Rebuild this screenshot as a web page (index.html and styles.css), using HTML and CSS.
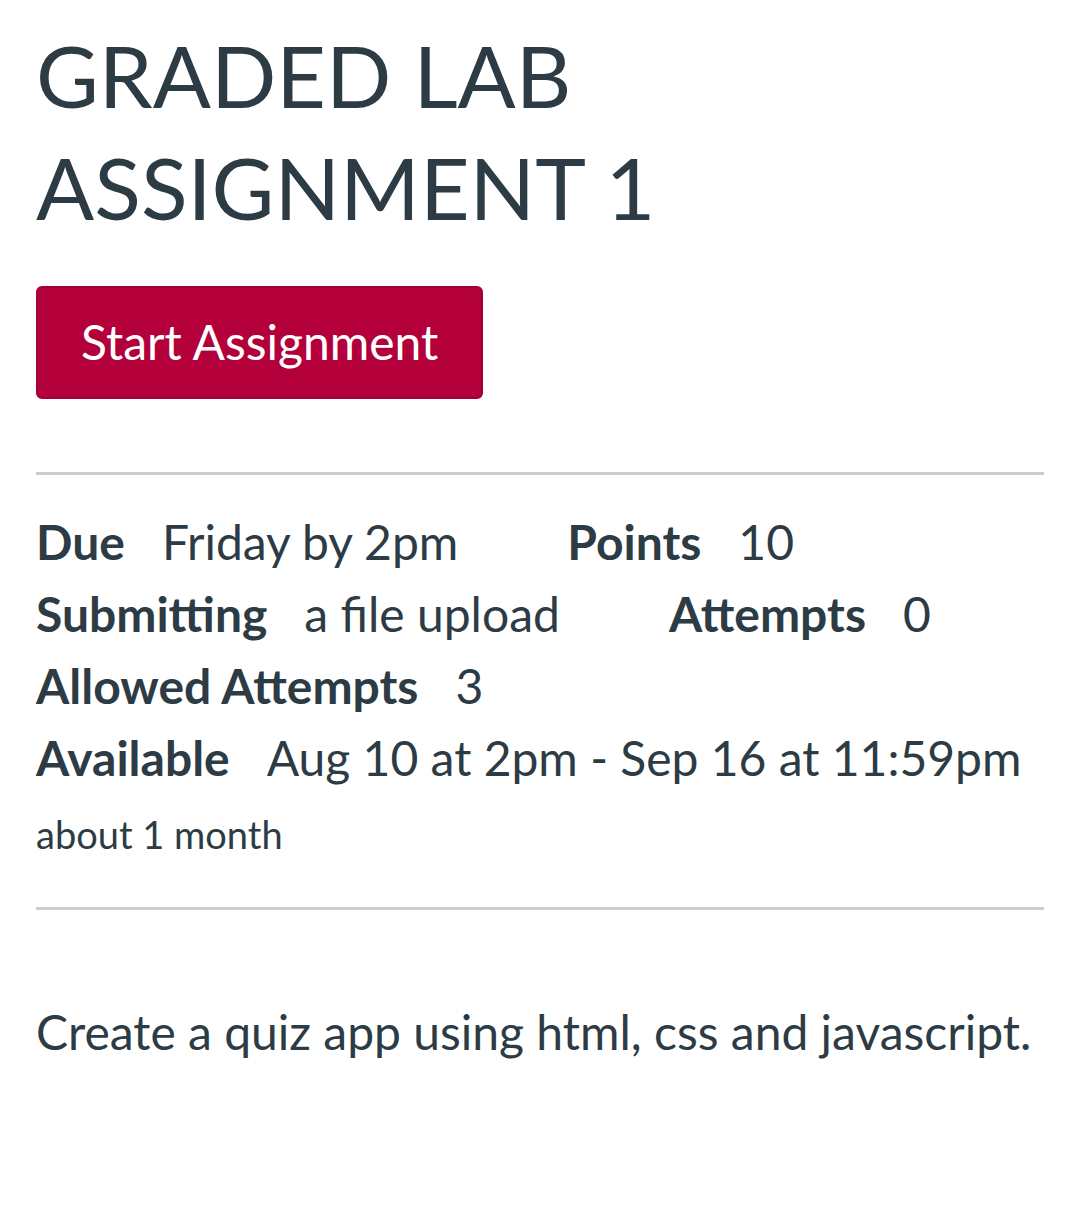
FILE: index.html
```html
<!DOCTYPE html>
<html lang="en">
<head>
  <meta charset="UTF-8">
  <meta name="viewport" content="width=device-width, initial-scale=1.0">
  <title>Graded Lab Assignment 1</title>
  <link rel="stylesheet" href="styles.css">
</head>
<body>
  <div class="assignment">
    <h1 class="assignment__title">GRADED LAB ASSIGNMENT 1</h1>
    <button class="btn btn--primary">Start Assignment</button>

    <ul class="overview">
      <li class="overview__item"><span class="overview__title">Due</span><span class="overview__value">Friday by 2pm</span></li>
      <li class="overview__item"><span class="overview__title">Points</span><span class="overview__value">10</span></li>
      <li class="overview__item"><span class="overview__title">Submitting</span><span class="overview__value">a file upload</span></li>
      <li class="overview__item"><span class="overview__title">Attempts</span><span class="overview__value">0</span></li>
      <li class="overview__item"><span class="overview__title">Allowed Attempts</span><span class="overview__value">3</span></li>
      <li class="overview__item"><span class="overview__title">Available</span><span class="overview__value">Aug 10 at 2pm - Sep 16 at 11:59pm</span></li>
    </ul>
    <div class="overview__note">about 1 month</div>

    <div class="assignment__description">
      <p>Create a quiz app using html, css and javascript.</p>
    </div>
  </div>
</body>
</html>
```

FILE: styles.css
```css
* {
  box-sizing: border-box;
}
body {
  margin: 0;
  font-family: Lato, 'Noto Sans', sans-serif;
  color: #2d3b45;
  background: #fff;
}
.assignment {
  padding: 19px 36px 0;
}
.assignment__title {
  margin: 0 0 43px;
  font-size: 86px;
  line-height: 112px;
  font-weight: 400;
  width: 700px;
}
.btn {
  border: 0;
  outline: none;
  cursor: pointer;
  font-family: inherit;
}
.btn--primary {
  display: block;
  height: 113px;
  padding: 0 43px 2px;
  font-size: 48px;
  color: #fff;
  background-color: #b4003a;
  border: 2px solid #a20034;
  border-radius: 6px;
}
.overview {
  list-style: none;
  margin: 73px 0 0;
  padding: 31px 0 0;
  border-top: 3px solid #c7cdd1;
  display: flex;
  flex-wrap: wrap;
  column-gap: 109px;
  font-size: 48px;
  line-height: 72px;
}
.overview__item {
  display: flex;
  gap: 37px;
}
.overview__title {
  font-weight: 700;
}
.overview__note {
  font-size: 38px;
  line-height: 54px;
  padding-top: 13px;
  padding-bottom: 46px;
  border-bottom: 3px solid #c7cdd1;
}
.assignment__description {
  padding-top: 86px;
  font-size: 48px;
  line-height: 72px;
}
.assignment__description p {
  margin: 0;
}
```
